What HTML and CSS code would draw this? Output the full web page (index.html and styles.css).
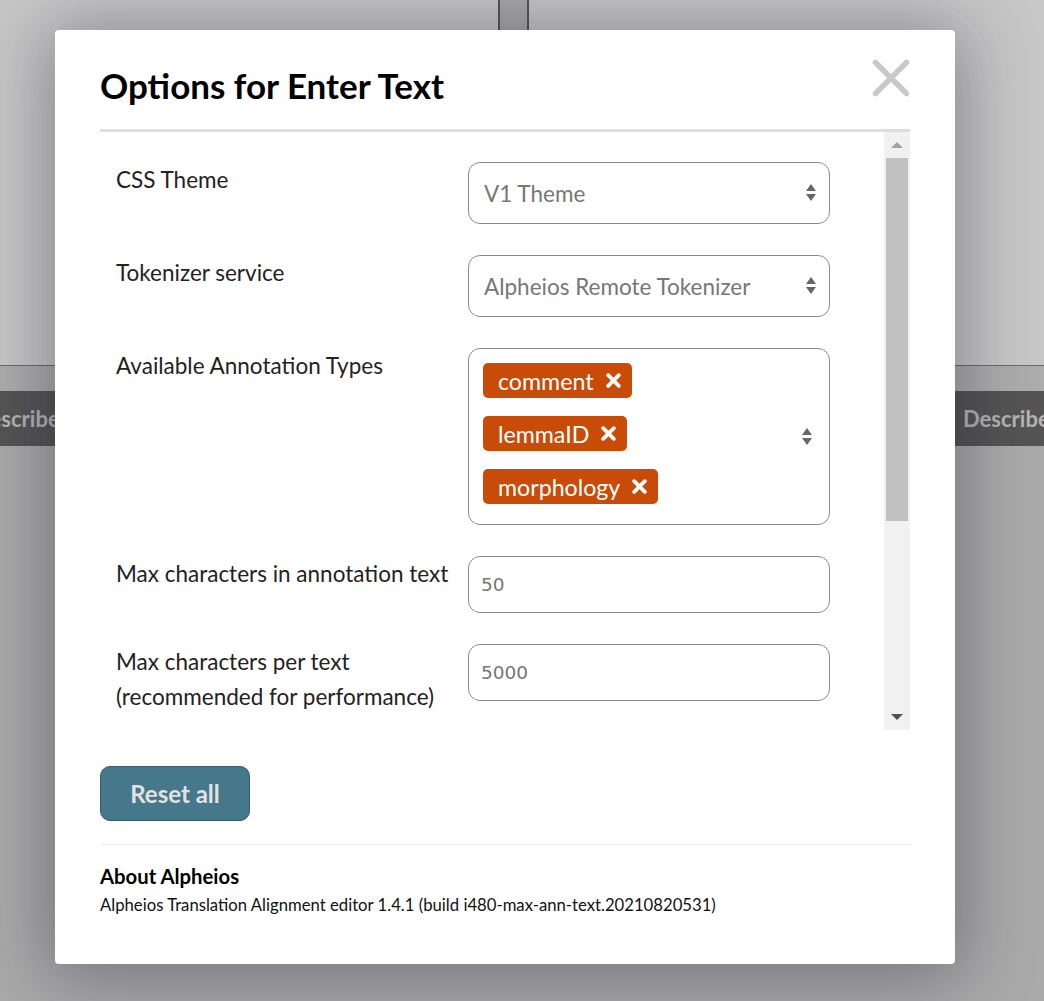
FILE: index.html
```html
<!DOCTYPE html>
<html lang="en">
<head>
<meta charset="utf-8">
<title>Options for Enter Text</title>
<link rel="stylesheet" href="styles.css">
</head>
<body>
<div class="backdrop">
  <div class="bg-top"><div class="bg-tab"></div></div>
  <div class="bg-strip"></div>
  <div class="bg-bar"><span class="bg-btn bg-btn-left">Describe</span><span class="bg-btn bg-btn-right">Describe</span></div>
  <div class="bg-bottom"></div>
</div>

<div class="modal" role="dialog" aria-labelledby="modal-title">
  <header class="modal-header">
    <h2 class="modal-title" id="modal-title">Options for Enter Text</h2>
    <button class="close-btn" aria-label="Close">
      <svg width="38" height="38" viewBox="0 0 38 38"><path d="M3.5 3.5L34.5 34.5M34.5 3.5L3.5 34.5" stroke="#c8c8c8" stroke-width="5.5" stroke-linecap="round" fill="none"/></svg>
    </button>
  </header>

  <div class="modal-body">
    <div class="options">
      <div class="option-row">
        <label class="option-label">CSS Theme</label>
        <div class="select-wrap">
          <select class="select"><option>V1 Theme</option></select>
          <svg class="arrows" width="10" height="17" viewBox="0 0 10 17"><path d="M0 7L5 0L10 7Z M0 10L10 10L5 17Z" fill="#666"/></svg>
        </div>
      </div>
      <div class="option-row">
        <label class="option-label">Tokenizer service</label>
        <div class="select-wrap">
          <select class="select"><option>Alpheios Remote Tokenizer</option></select>
          <svg class="arrows" width="10" height="17" viewBox="0 0 10 17"><path d="M0 7L5 0L10 7Z M0 10L10 10L5 17Z" fill="#666"/></svg>
        </div>
      </div>
      <div class="option-row">
        <label class="option-label">Available Annotation Types</label>
        <div class="multiselect">
          <div class="tags">
            <span class="tag">comment<svg class="tag-x" width="15" height="15" viewBox="0 0 15 15"><path d="M2.2 2.2L12.8 12.8M12.8 2.2L2.2 12.8" stroke="#fff" stroke-width="3.8" stroke-linecap="round"/></svg></span>
            <span class="tag">lemmaID<svg class="tag-x" width="15" height="15" viewBox="0 0 15 15"><path d="M2.2 2.2L12.8 12.8M12.8 2.2L2.2 12.8" stroke="#fff" stroke-width="3.8" stroke-linecap="round"/></svg></span>
            <span class="tag">morphology<svg class="tag-x" width="15" height="15" viewBox="0 0 15 15"><path d="M2.2 2.2L12.8 12.8M12.8 2.2L2.2 12.8" stroke="#fff" stroke-width="3.8" stroke-linecap="round"/></svg></span>
          </div>
          <svg class="arrows ms-arrows" width="10" height="17" viewBox="0 0 10 17"><path d="M0 7L5 0L10 7Z M0 10L10 10L5 17Z" fill="#666"/></svg>
        </div>
      </div>
      <div class="option-row">
        <label class="option-label">Max characters in annotation text</label>
        <input class="num-input" type="number" value="50">
      </div>
      <div class="option-row">
        <label class="option-label">Max characters per text<br>(recommended for performance)</label>
        <input class="num-input" type="number" value="5000">
      </div>
      <div class="option-row">
        <label class="option-label">Show summary popup</label>
        <input class="num-input" type="text" value="">
      </div>
    </div>
    <div class="scrollbar" aria-hidden="true">
      <div class="sb-btn"><svg width="12" height="6" viewBox="0 0 12 6"><path d="M0 6L6 0L12 6Z" fill="#a3a3a3"/></svg></div>
      <div class="sb-track"><div class="sb-thumb"></div></div>
      <div class="sb-btn"><svg width="12" height="6" viewBox="0 0 12 6"><path d="M0 0L12 0L6 6Z" fill="#505050"/></svg></div>
    </div>
  </div>

  <footer class="modal-footer">
    <button class="reset-btn">Reset all</button>
    <hr class="divider">
    <h3 class="about-title">About Alpheios</h3>
    <p class="about-text">Alpheios Translation Alignment editor 1.4.1 (build i480-max-ann-text.20210820531)</p>
  </footer>
</div>
</body>
</html>
```

FILE: styles.css
```css
* { box-sizing: border-box; }
html, body { margin: 0; padding: 0; }
body {
  width: 1044px;
  height: 1001px;
  overflow: hidden;
  position: relative;
  font-family: Lato, "Noto Sans", sans-serif;
  background: #aaaaaa;
}

/* backdrop (page behind overlay) */
.backdrop { display: flex; flex-direction: column; height: 1001px; overflow: hidden; }
.bg-top { height: 366px; flex: none; background: #c7c7c7; border-bottom: 1px solid #6a6a6a; display: flex; }
.bg-tab { width: 31px; height: 60px; margin-left: 498px; background: #a9a9a9; border-left: 2px solid #555; border-right: 2px solid #555; }
.bg-strip { height: 25px; flex: none; background: #adadad; }
.bg-bar { height: 55px; flex: none; background: #545454; display: flex; align-items: center; font-weight: 700; font-size: 22px; color: #b5b5b5; white-space: nowrap; overflow: hidden; }
.bg-btn-left { margin-left: -27px; }
.bg-btn-right { margin-left: auto; width: 81px; flex: none; }
.bg-bottom { flex: 1; background: #aaaaaa; }

/* modal */
.modal {
  position: absolute;
  left: 55px;
  top: 30px;
  width: 900px;
  height: 934px;
  background: #fff;
  border-radius: 4px;
  box-shadow: 0 6px 70px 8px rgba(30, 30, 50, 0.38);
  padding: 0 45px;
  display: flex;
  flex-direction: column;
}
.modal-header {
  height: 102px;
  display: flex;
  justify-content: space-between;
  align-items: flex-start;
  border-bottom: 3px solid #dddddd;
  flex: none;
}
.modal-title {
  margin: 34px 0 0;
  font-size: 35px;
  line-height: 42px;
  font-weight: 700;
  color: #000;
}
.close-btn {
  margin-top: 29px;
  padding: 0;
  border: 0;
  background: none;
  width: 38px;
  height: 38px;
  display: block;
}
.close-btn svg { display: block; }

.modal-body { display: flex; height: 598px; flex: none; }
.options { flex: 1; overflow: hidden; padding-top: 30px; }
.option-row { display: flex; padding-left: 16px; margin-bottom: 31px; align-items: flex-start; }
.option-label { width: 352px; flex: none; font-size: 22.5px; line-height: 35px; color: #222; }

.select-wrap { position: relative; width: 362px; }
.select {
  appearance: none;
  -webkit-appearance: none;
  width: 362px;
  height: 62px;
  border: 1px solid #8a8a8a;
  border-radius: 12px;
  background: #fff;
  padding: 0 40px 0 15px;
  font-family: inherit;
  font-size: 22.5px;
  color: #777;
  display: block;
}
.arrows { position: absolute; right: 14px; top: 22px; pointer-events: none; }

.multiselect {
  position: relative;
  width: 362px;
  height: 177px;
  border: 1px solid #8a8a8a;
  border-radius: 12px;
  padding: 14px 40px 0 14px;
}
.ms-arrows { top: 79px; right: 17px; }
.tags { display: flex; flex-direction: column; align-items: flex-start; gap: 18px; }
.tag {
  display: inline-flex;
  align-items: center;
  height: 35px;
  padding: 0 11px 0 15px;
  gap: 12px;
  background: #c84c08;
  color: #fff;
  border-radius: 5px;
  font-size: 23.2px;
}
.tag-x { display: block; }

.num-input {
  width: 362px;
  height: 57px;
  border: 1px solid #8a8a8a;
  border-radius: 12px;
  padding: 0 12px;
  font-family: "DejaVu Sans", sans-serif;
  font-size: 18.5px;
  color: #757575;
  background: #fff;
  -moz-appearance: textfield;
}
.num-input::-webkit-outer-spin-button,
.num-input::-webkit-inner-spin-button { -webkit-appearance: none; margin: 0; }

.scrollbar { width: 26px; flex: none; display: flex; flex-direction: column; background: #f1f1f1; }
.sb-btn { height: 26px; display: flex; align-items: center; justify-content: center; flex: none; }
.sb-btn svg { display: block; }
.sb-track { flex: 1; padding: 0 2px; }
.sb-thumb { height: 363px; background: #c1c1c1; }

.modal-footer { padding-top: 36px; }
.reset-btn {
  width: 150px;
  height: 55px;
  background: #46788c;
  border: 1px solid #3b5966;
  border-radius: 10px;
  color: #e2e2e2;
  font-family: inherit;
  font-size: 24px;
  line-height: 30px;
  font-weight: 700;
  padding: 0;
  display: block;
}
.divider { margin: 23px 0 0; border: 0; border-top: 1px solid #eeeeee; }
.about-title { margin: 19px 0 0; font-size: 20.3px; line-height: 24px; font-weight: 700; color: #000; }
.about-text { margin: 7px 0 0; font-size: 16.7px; line-height: 21px; color: #111; }
```
